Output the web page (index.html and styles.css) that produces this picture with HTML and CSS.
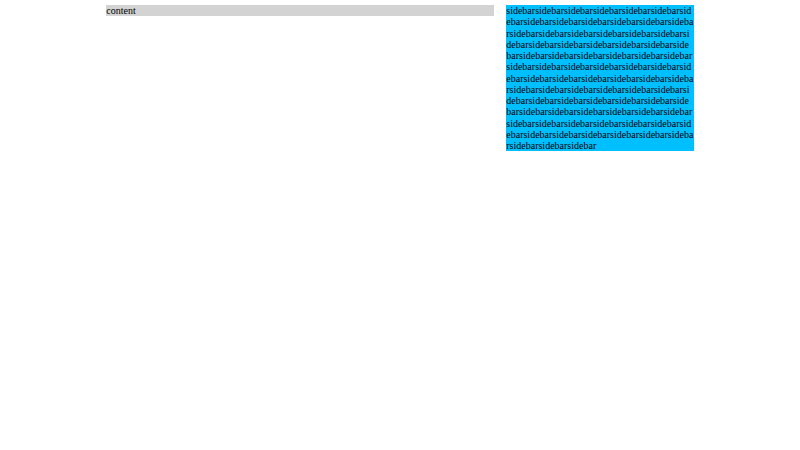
FILE: index.html
```html
<!DOCTYPE html>
<html>
<head>
<meta charset="utf-8">
<link rel="stylesheet" href="styles.css">
</head>
<body>
<div class="layout">
  <div class="content">content</div>
  <div class="sidebar">sidebarsidebarsidebarsidebarsidebarsidebarsidebarsidebarsidebarsidebarsidebarsidebarsidebarsidebarsidebarsidebarsidebarsidebarsidebarsidebarsidebarsidebarsidebarsidebarsidebarsidebarsidebarsidebarsidebarsidebarsidebarsidebarsidebarsidebarsidebarsidebarsidebarsidebarsidebarsidebarsidebarsidebarsidebarsidebarsidebarsidebarsidebarsidebarsidebarsidebarsidebarsidebarsidebarsidebarsidebarsidebarsidebarsidebarsidebarsidebarsidebarsidebarsidebarsidebarsidebarsidebarsidebarsidebarsidebarsidebarsidebarsidebarsidebarsidebarsidebarsidebarsidebarsidebarsidebarsidebar</div>
</div>
</body>
</html>
```
FILE: styles.css
```css
body {
  margin: 0;
  font-family: "Liberation Serif", "Times New Roman", serif;
  font-size: 10px;
  line-height: 11.25px;
}
.layout {
  width: 587.5px;
  margin: 5px auto 0;
  display: flex;
  gap: 12.5px;
  align-items: flex-start;
}
.content {
  width: 387.5px;
  background: #d3d3d3;
}
.sidebar {
  width: 187.5px;
  background: #00bfff;
  word-break: break-all;
}
```
